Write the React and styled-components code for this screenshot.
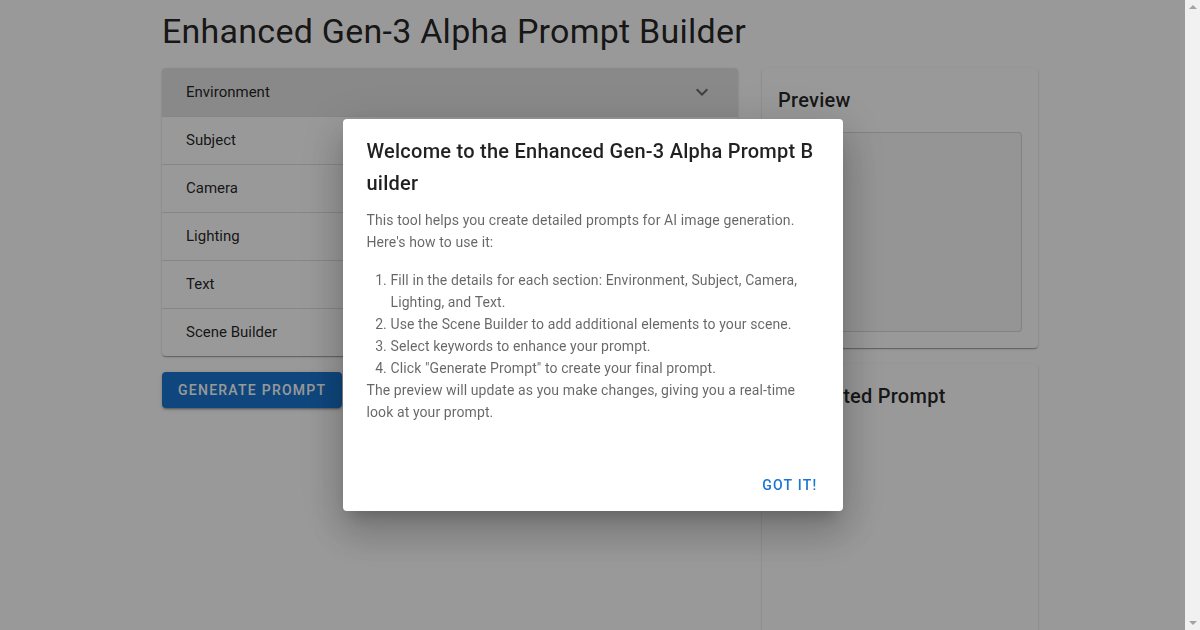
import React from "react";
import styled, { createGlobalStyle } from "styled-components";

const Global = createGlobalStyle`
  html, body { margin: 0; padding: 0; background: #fff; }
  body { font-family: Roboto, "Noto Sans", "Liberation Sans", sans-serif; color: rgba(0,0,0,0.87); }
  * { box-sizing: border-box; }
`;

const Page = styled.div`
  width: 876px;
  margin-left: 162px;
  padding: 10px 0 0;
`;

const Title = styled.h1`
  margin: 0 0 16px;
  font-size: 34px;
  font-weight: 400;
  line-height: 42px;
  letter-spacing: 0.00735em;
`;

const Grid = styled.div`
  display: grid;
  grid-template-columns: 576px 276px;
  column-gap: 24px;
  align-items: start;
`;

const Column = styled.div`
  display: flex;
  flex-direction: column;
  align-items: flex-start;
`;

const Accordion = styled.div`
  width: 100%;
  background: #fff;
  border-radius: 4px;
  box-shadow: 0px 2px 1px -1px rgba(0,0,0,0.2), 0px 1px 1px 0px rgba(0,0,0,0.14), 0px 1px 3px 0px rgba(0,0,0,0.12);
  overflow: hidden;
`;

const Row = styled.div`
  height: 48px;
  display: flex;
  align-items: center;
  justify-content: space-between;
  padding: 0 24px 1px;
  font-size: 15px;
  line-height: 24px;
  background: ${(p) => (p.$focused ? "rgba(0,0,0,0.1)" : "transparent")};
  border-top: ${(p) => (p.$first ? "none" : "1px solid rgba(0,0,0,0.12)")};
`;

const Chevron = styled.svg`
  width: 24px;
  height: 24px;
  fill: rgba(0,0,0,0.54);
`;

const PrimaryButton = styled.button`
  margin-top: 16px;
  height: 36px;
  padding: 6px 16px;
  border: none;
  border-radius: 4px;
  background: #1976d2;
  color: #fff;
  font-family: inherit;
  font-size: 14px;
  font-weight: 500;
  line-height: 24px;
  letter-spacing: 1.25px;
  text-transform: uppercase;
  box-shadow: 0px 3px 1px -2px rgba(0,0,0,0.2), 0px 2px 2px 0px rgba(0,0,0,0.14), 0px 1px 5px 0px rgba(0,0,0,0.12);
`;

const Card = styled.div`
  width: 100%;
  background: #fff;
  border-radius: 4px;
  padding: 16px;
  margin-top: ${(p) => (p.$spaced ? "16px" : "0")};
  min-height: ${(p) => p.$minH || "auto"};
  box-shadow: 0px 2px 1px -1px rgba(0,0,0,0.2), 0px 1px 1px 0px rgba(0,0,0,0.14), 0px 1px 3px 0px rgba(0,0,0,0.12);
`;

const CardTitle = styled.h2`
  margin: 0 0 16px;
  font-size: 20px;
  font-weight: 500;
  line-height: 32px;
  letter-spacing: 0.25px;
`;

const PreviewBox = styled.div`
  height: 200px;
  border: 1px solid rgba(0,0,0,0.12);
  border-radius: 4px;
  background: #f8f8f8;
`;

const Backdrop = styled.div`
  position: fixed;
  top: 0;
  bottom: 0;
  left: 0;
  right: 15px;
  background: rgba(0,0,0,0.4);
  display: flex;
  align-items: center;
  justify-content: center;
`;

const ScrollTrack = styled.div`
  position: fixed;
  top: 0;
  right: 0;
  bottom: 0;
  width: 15px;
  background: #f1f1f1;
  display: flex;
  flex-direction: column;
  justify-content: space-between;
  align-items: center;
  padding: 5px 0;
`;

const Arrow = styled.span`
  width: 0;
  height: 0;
  border-left: 4px solid transparent;
  border-right: 4px solid transparent;
  ${(p) => (p.$up ? "border-bottom: 4px solid #a3a3a3;" : "border-top: 4px solid #a3a3a3;")}
`;

const Dialog = styled.div`
  width: 500px;
  background: #fff;
  border-radius: 4px;
  box-shadow: 0px 11px 15px -7px rgba(0,0,0,0.2), 0px 24px 38px 3px rgba(0,0,0,0.14), 0px 9px 46px 8px rgba(0,0,0,0.12);
  display: flex;
  flex-direction: column;
`;

const DialogTitle = styled.h2`
  margin: 0;
  padding: 16px 24px 10px;
  font-size: 20px;
  font-weight: 500;
  line-height: 32px;
  letter-spacing: 0.25px;
  word-break: break-all;
  color: rgba(0,0,0,0.87);
`;

const DialogContent = styled.div`
  padding: 0 24px 19px;
  font-size: 14px;
  line-height: 22px;
  letter-spacing: 0.1px;
  color: rgba(0,0,0,0.6);
`;

const Text = styled.p`
  margin: 0 0 ${(p) => (p.$mb ? "16px" : "0")};
`;

const Steps = styled.ol`
  margin: 0;
  padding-left: 24px;
`;

const Actions = styled.div`
  display: flex;
  justify-content: flex-end;
  padding: 8px 17px 8px 8px;
`;

const TextButton = styled.button`
  min-width: 64px;
  height: 37px;
  padding: 6px 8px;
  border: none;
  background: transparent;
  color: #1976d2;
  font-family: inherit;
  font-size: 14px;
  font-weight: 500;
  line-height: 24px;
  letter-spacing: 1.25px;
  text-transform: uppercase;
  border-radius: 4px;
`;

const sections = ["Environment", "Subject", "Camera", "Lighting", "Text", "Scene Builder"];

export default function App() {
  return (
    <>
      <Global />
      <Page>
        <Title>Enhanced Gen-3 Alpha Prompt Builder</Title>
        <Grid>
          <Column>
            <Accordion>
              {sections.map((s, i) => (
                <Row key={s} $first={i === 0} $focused={i === 0}>
                  <span>{s}</span>
                  <Chevron viewBox="0 0 24 24">
                    <path d="M16.59 8.59 12 13.17 7.41 8.59 6 10l6 6 6-6z" />
                  </Chevron>
                </Row>
              ))}
            </Accordion>
            <PrimaryButton>Generate Prompt</PrimaryButton>
          </Column>
          <Column>
            <Card>
              <CardTitle>Preview</CardTitle>
              <PreviewBox />
            </Card>
            <Card $spaced $minH="290px">
              <CardTitle>Generated Prompt</CardTitle>
            </Card>
          </Column>
        </Grid>
      </Page>
      <Backdrop>
        <Dialog role="dialog">
          <DialogTitle>Welcome to the Enhanced Gen-3 Alpha Prompt Builder</DialogTitle>
          <DialogContent>
            <Text $mb>
              This tool helps you create detailed prompts for AI image generation. Here's how to use it:
            </Text>
            <Steps>
              <li>Fill in the details for each section: Environment, Subject, Camera, Lighting, and Text.</li>
              <li>Use the Scene Builder to add additional elements to your scene.</li>
              <li>Select keywords to enhance your prompt.</li>
              <li>Click "Generate Prompt" to create your final prompt.</li>
            </Steps>
            <Text $mb>
              The preview will update as you make changes, giving you a real-time look at your prompt.
            </Text>
          </DialogContent>
          <Actions>
            <TextButton>Got it!</TextButton>
          </Actions>
        </Dialog>
      </Backdrop>
      <ScrollTrack aria-hidden="true">
        <Arrow $up />
        <Arrow />
      </ScrollTrack>
    </>
  );
}
